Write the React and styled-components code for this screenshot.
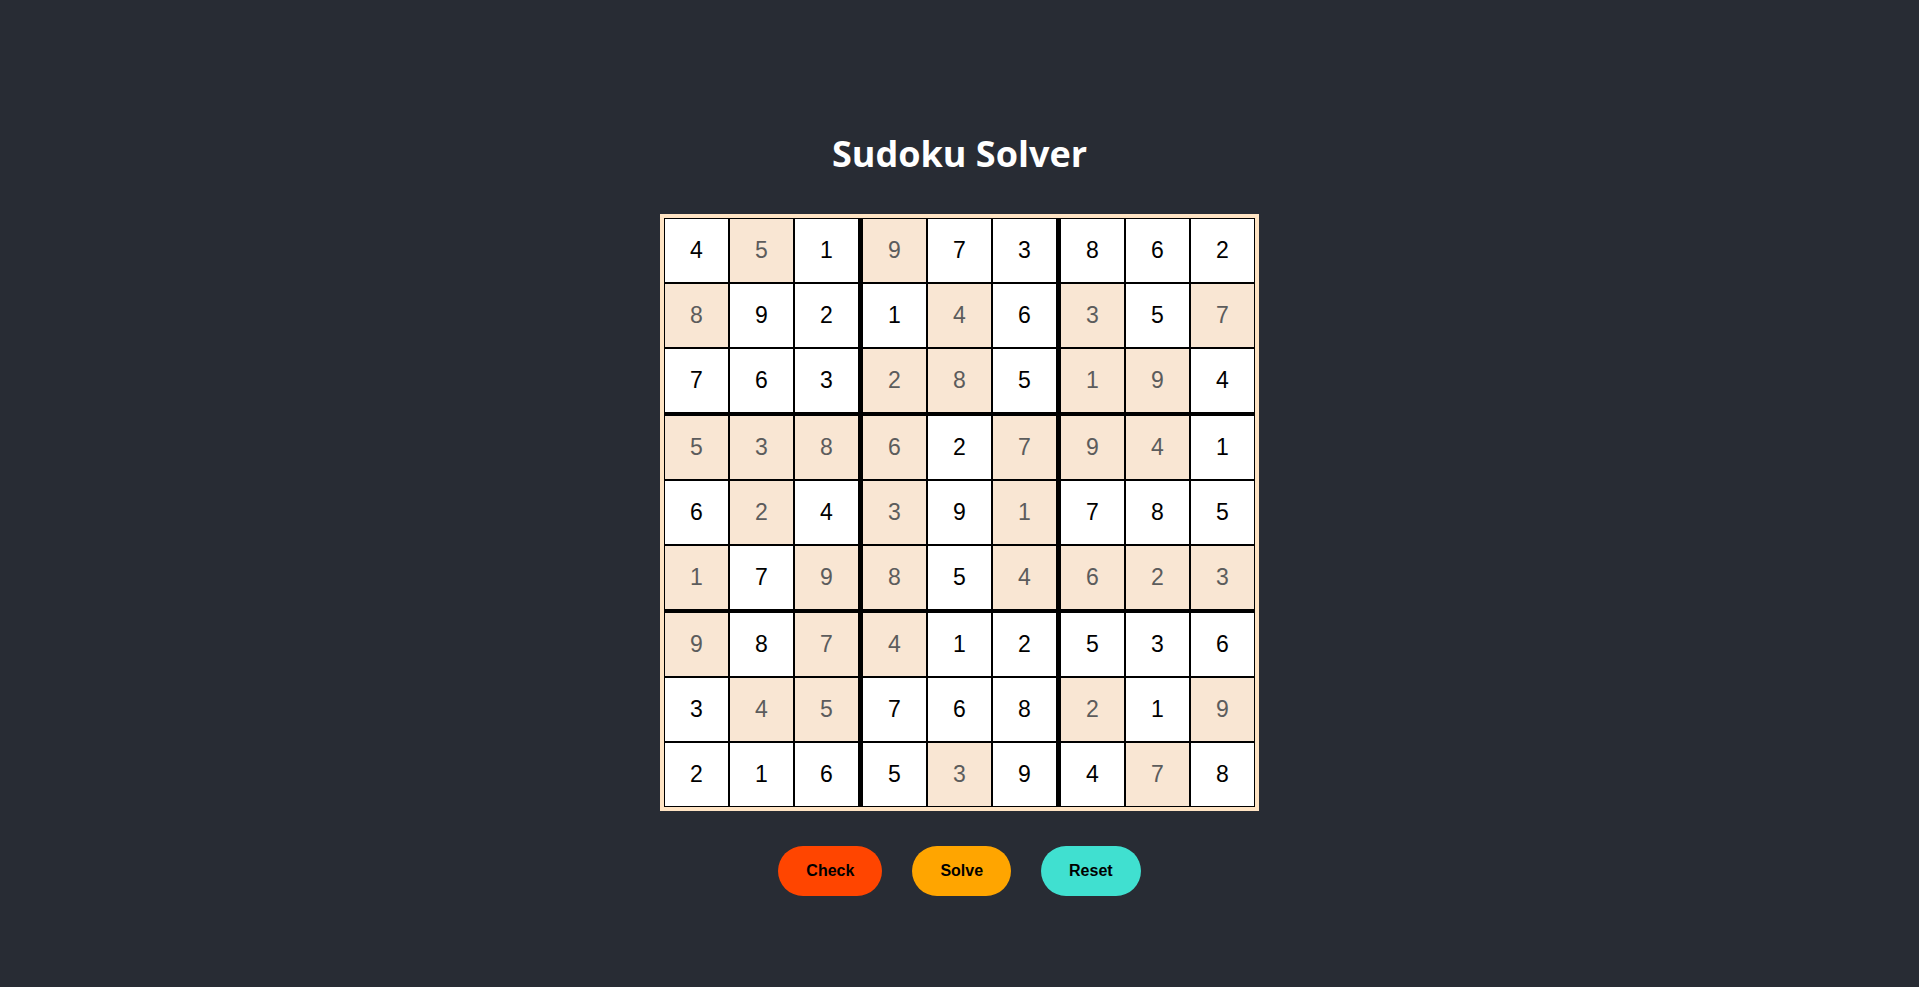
import React from "react";
import styled, { createGlobalStyle } from "styled-components";

const GlobalStyle = createGlobalStyle`
  html, body {
    margin: 0;
    padding: 0;
    background: #ffffff;
  }
  body {
    font-family: "Liberation Sans", Arial, sans-serif;
  }
`;

const Page = styled.main`
  min-height: calc(100vh - 2px);
  box-sizing: border-box;
  display: flex;
  flex-direction: column;
  align-items: center;
  padding-top: 131px;
  background: #282c34;
`;

const Title = styled.h1`
  margin: 0 0 37px;
  font-family: "Open Sans", "Noto Sans", sans-serif;
  font-weight: 700;
  font-size: 36px;
  line-height: 46px;
  color: #ffffff;
`;

const Board = styled.div`
  background: #ffe4c4;
  padding: 4px;
`;

const Grid = styled.table`
  border-collapse: separate;
  border-spacing: 0;
`;

const Cell = styled.td`
  box-sizing: content-box;
  width: 63px;
  height: 63px;
  padding: 0;
  text-align: center;
  vertical-align: middle;
  border: 1px solid #000;
  border-right-width: ${(p) => (p.$thickRight ? "4px" : "1px")};
  border-bottom-width: ${(p) => (p.$thickBottom ? "3px" : "1px")};
  background: ${(p) => (p.$given ? "#f9e6d3" : "#ffffff")};
  color: ${(p) => (p.$given ? "#5c5c5c" : "#000000")};
  font-family: "Liberation Sans", Arial, sans-serif;
  font-size: 23px;
`;

const Actions = styled.div`
  display: flex;
  gap: 30px;
  margin-top: 35px;
`;

const ActionButton = styled.button`
  height: 50px;
  padding: 0 28px;
  border: none;
  border-radius: 25px;
  background: ${(p) => p.$color};
  color: #000;
  font-family: "Liberation Sans", Arial, sans-serif;
  font-weight: 700;
  font-size: 16px;
  cursor: pointer;
`;

const values = [
  "451973862",
  "892146357",
  "763285194",
  "538627941",
  "624391785",
  "179854623",
  "987412536",
  "345768219",
  "216539478",
];

// 1 marks a clue cell, shown on a tinted background
const given = [
  "010100000",
  "100010101",
  "000110110",
  "111101110",
  "010101000",
  "101101111",
  "101100000",
  "011000101",
  "000010010",
];

export default function App() {
  return (
    <>
      <GlobalStyle />
      <Page>
        <Title>Sudoku Solver</Title>
        <Board>
          <Grid>
            <tbody>
              {values.map((row, r) => (
                <tr key={r}>
                  {row.split("").map((v, c) => (
                    <Cell
                      key={c}
                      $given={given[r][c] === "1"}
                      $thickRight={c === 2 || c === 5}
                      $thickBottom={r === 2 || r === 5}
                    >
                      {v}
                    </Cell>
                  ))}
                </tr>
              ))}
            </tbody>
          </Grid>
        </Board>
        <Actions>
          <ActionButton $color="#ff4500">Check</ActionButton>
          <ActionButton $color="#ffa500">Solve</ActionButton>
          <ActionButton $color="#40e0d0">Reset</ActionButton>
        </Actions>
      </Page>
    </>
  );
}
